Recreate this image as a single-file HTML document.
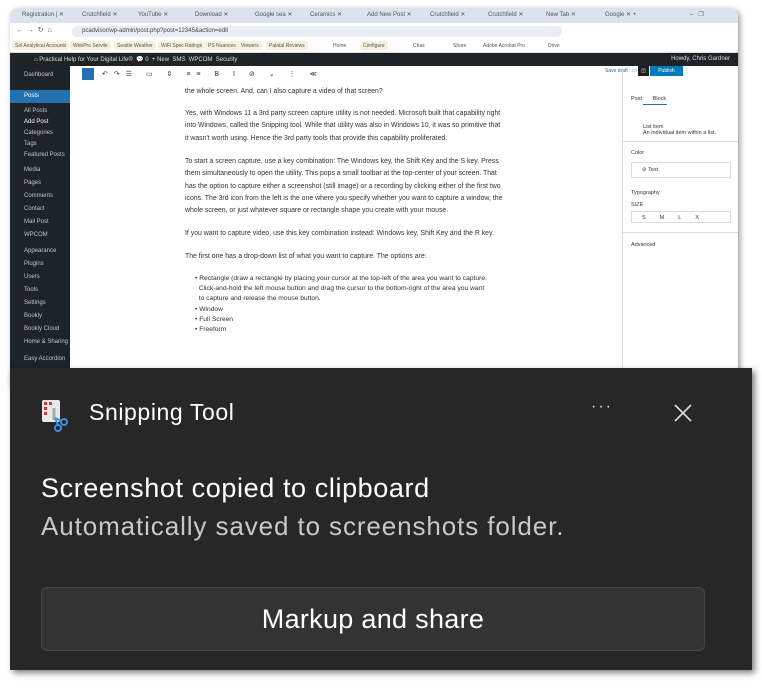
<!DOCTYPE html>
<html><head><meta charset="utf-8"><style>
*{margin:0;padding:0;box-sizing:border-box}
body{width:762px;height:696px;background:#fff;position:relative;overflow:hidden;font-family:"Liberation Sans",sans-serif}
.frame{position:absolute;left:10px;top:8px;width:728px;height:380px;background:#fff;border-radius:8px 8px 0 0;overflow:hidden;box-shadow:2px 2px 6px rgba(0,0,0,.4)}
.tabs{position:absolute;left:0;top:0;width:100%;height:15px;background:#dde3ee}
.tab{position:absolute;top:3px;height:10px;font-size:6px;color:#555;white-space:nowrap}
.addr{position:absolute;top:15px;left:0;width:100%;height:15px;background:#fff}
.url{position:absolute;left:62px;top:3px;width:300px;height:11px;background:#e9edf4;border-radius:6px;font-size:6px;color:#444;padding:2px 10px}
.bm{position:absolute;top:30px;left:0;width:100%;height:15px;background:#fff;border-bottom:1px solid #ddd}
.bk{position:absolute;top:3px;height:9px;font-size:5px;color:#555;background:#f6f1dc;border-radius:3px;padding:2px 3px}
.admin{position:absolute;top:45px;left:0;width:100%;height:13px;background:#1d2327;font-size:6px;color:#ddd}
.side{position:absolute;top:58px;left:0;width:60px;height:330px;background:#1d2327;font-size:6px;color:#c3c4c7}
.side div{position:absolute;left:14px}
.posts{position:absolute;left:0!important;top:24px;width:60px;height:13px;background:#2271b1;color:#fff;padding:3px 0 0 14px}
.edtext{position:absolute;left:175px;font-size:6.9px;color:#333;line-height:12.3px;white-space:nowrap}
.rs{position:absolute;left:612px;top:58px;width:116px;height:330px;border-left:1px solid #ddd;font-size:5.5px;color:#333}
.note{position:absolute;left:10px;top:368px;width:742px;height:302px;background:#272727;color:#fff;box-shadow:3px 3px 6px rgba(0,0,0,.5);font-family:"Liberation Sans",sans-serif}
</style></head><body>
<div class="frame">
 <div class="tabs">
  <div class="tab" style="left:12px">Registration | ✕</div><div class="tab" style="left:72px">Crutchfield ✕</div><div class="tab" style="left:128px">YouTube ✕</div><div class="tab" style="left:185px">Download ✕</div><div class="tab" style="left:245px">Google sea ✕</div><div class="tab" style="left:300px">Ceramics ✕</div><div class="tab" style="left:357px">Add New Post ✕</div><div class="tab" style="left:420px">Crutchfield ✕</div><div class="tab" style="left:478px">Crutchfield ✕</div><div class="tab" style="left:536px">New Tab ✕</div><div class="tab" style="left:595px">Google ✕ +</div><div class="tab" style="left:680px">–&nbsp;&nbsp;&nbsp;❐</div>
 </div>
 <div class="addr"><span style="position:absolute;left:6px;top:3px;font-size:7px;color:#555">←&nbsp;&nbsp;→&nbsp;&nbsp;↻&nbsp;&nbsp;⌂</span><div style="position:absolute;left:62px;top:3px;width:490px;height:11px;background:#e9edf4;border-radius:6px"></div><div class="url">pcadvisor/wp-admin/post.php?post=12345&action=edit</div></div>
 <div class="bm"><div class="bk" style="left:2px">Sol Analytical Accounts</div><div class="bk" style="left:60px">WebPro Servile</div><div class="bk" style="left:104px">Seattle Weather</div><div class="bk" style="left:148px">WiFi Spec Ratings</div><div class="bk" style="left:195px">PS Nuances</div><div class="bk" style="left:228px">Viewers</div><div class="bk" style="left:256px">Palatal Reviews</div><div class="bk" style="left:320px;background:#fff">Home</div><div class="bk" style="left:350px">Configure</div><div class="bk" style="left:400px;background:#fff">Chas</div><div class="bk" style="left:440px;background:#fff">Share</div><div class="bk" style="left:470px;background:#fff">Adobe Acrobat Pro</div><div class="bk" style="left:535px;background:#fff">Drive</div></div>
 <div class="admin"><span style="position:absolute;left:24px;top:3px">⌂ Practical Help for Your Digital Life® &nbsp;💬 0 &nbsp;+ New &nbsp;SMS &nbsp;WPCOM &nbsp;Security</span><span style="position:absolute;right:8px;top:3px">Howdy, Chris Gardner</span></div>
 <div class="side">
  <div style="top:6px">Dashboard</div><div class="posts">Posts</div>
  <div style="top:42px">All Posts</div><div style="top:53px;color:#fff">Add Post</div><div style="top:64px">Categories</div><div style="top:75px">Tags</div><div style="top:86px">Featured Posts</div>
  <div style="top:101px">Media</div><div style="top:114px">Pages</div><div style="top:127px">Comments</div><div style="top:140px">Contact</div><div style="top:153px">Mail Post</div><div style="top:166px">WPCOM</div><div style="top:182px">Appearance</div><div style="top:195px">Plugins</div><div style="top:208px">Users</div><div style="top:221px">Tools</div><div style="top:234px">Settings</div><div style="top:247px">Bookly</div><div style="top:260px">Bookly Cloud</div><div style="top:273px">Home & Sharing</div><div style="top:290px">Easy Accordion</div>
 </div>
 <div style="position:absolute;left:72px;top:60px;width:12px;height:12px;background:#2271b1"></div>
 <div style="position:absolute;left:92px;top:62px;font-size:7px;color:#333;letter-spacing:6px">↶↷☰ ▭ ⇕ ≡≡ B I ⊘ ⌄ ⋮ ≪</div>
 <div class="edtext" style="top:78px">the whole screen. And, can I also capture a video of that screen?</div>
 <div class="edtext" style="top:100px">Yes, with Windows 11 a 3rd party screen capture utility is not needed. Microsoft built that capability right<br>into Windows, called the Snipping tool. While that utility was also in Windows 10, it was so primitive that<br>it wasn't worth using. Hence the 3rd party tools that provide this capability proliferated.</div>
 <div class="edtext" style="top:148px">To start a screen capture, use a key combination: The Windows key, the Shift Key and the S key. Press<br>them simultaneously to open the utility. This pops a small toolbar at the top-center of your screen. That<br>has the option to capture either a screenshot (still image) or a recording by clicking either of the first two<br>icons. The 3rd icon from the left is the one where you specify whether you want to capture a window, the<br>whole screen, or just whatever square or rectangle shape you create with your mouse.</div>
 <div class="edtext" style="top:220px">If you want to capture video, use this key combination instead: Windows key, Shift Key and the R key.</div>
 <div class="edtext" style="top:243px">The first one has a drop-down list of what you want to capture. The options are:</div>
 <div class="edtext" style="top:266px;left:185px;line-height:10.2px;font-size:6.7px">• Rectangle (draw a rectangle by placing your cursor at the top-left of the area you want to capture.<br>&nbsp;&nbsp;Click-and-hold the left mouse button and drag the cursor to the bottom-right of the area you want<br>&nbsp;&nbsp;to capture and release the mouse button.<br>• Window<br>• Full Screen<br>• Freeform</div>
 <div style="position:absolute;left:595px;top:60px;width:120px;height:12px;font-size:5px;color:#2271b1">Save draft &nbsp;&nbsp;▭ <span style="background:#1e1e1e;color:#fff;padding:2px 3px">◫</span> <span style="background:#007cba;color:#fff;padding:2px 8px">Publish</span> ⋮</div>
 <div class="rs">
  <div style="position:absolute;left:8px;top:30px">Post &nbsp;&nbsp;&nbsp;&nbsp;&nbsp;&nbsp;Block</div><div style="position:absolute;left:20px;top:38px;width:24px;height:1px;background:#2271b1"></div>
  <div style="position:absolute;left:20px;top:58px">List item<br>An individual item within a list.</div>
  <div style="position:absolute;left:0;top:75px;width:100%;height:1px;background:#ddd"></div>
  <div style="position:absolute;left:8px;top:84px">Color</div>
  <div style="position:absolute;left:8px;top:96px;width:100px;height:16px;border:1px solid #ddd;padding:4px 10px">⊘ Text</div>
  <div style="position:absolute;left:8px;top:124px">Typography</div><div style="position:absolute;left:8px;top:136px">SIZE</div>
  <div style="position:absolute;left:8px;top:145px;width:100px;height:12px;border:1px solid #ddd;padding:3px 10px;letter-spacing:14px">SMLX</div>
  <div style="position:absolute;left:0;top:166px;width:100%;height:1px;background:#ddd"></div>
  <div style="position:absolute;left:8px;top:176px">Advanced</div>
 </div>
</div>
<div class="note">
 <svg style="position:absolute;left:30px;top:30px" width="34" height="34" viewBox="0 0 34 34"><rect x="2" y="2" width="18" height="22" rx="2" fill="#e8e8e8"/><rect x="4" y="4" width="3" height="3" fill="#d33"/><rect x="9" y="4" width="3" height="3" fill="#d33"/><rect x="4" y="9" width="3" height="3" fill="#d33"/><rect x="4" y="14" width="3" height="3" fill="#d33"/><path d="M14 10v12" stroke="#aaa" stroke-width="3"/><circle cx="24" cy="24" r="3" fill="none" stroke="#3a8ee6" stroke-width="2"/><circle cx="18" cy="30" r="3" fill="none" stroke="#3a8ee6" stroke-width="2"/><path d="M15 20l3 7M15 20l7 3" stroke="#3a8ee6" stroke-width="2"/></svg>
 <div style="position:absolute;left:79px;top:31px;font-size:23px;color:#fff;letter-spacing:0.6px">Snipping Tool</div>
 <div style="position:absolute;left:581px;top:30px;font-size:16px;color:#ddd;letter-spacing:2px">···</div>
 <svg style="position:absolute;left:664px;top:36px" width="18" height="18"><path d="M1 1L17 17M17 1L1 17" stroke="#ddd" stroke-width="1.6"/></svg>
 <div style="position:absolute;left:31px;top:105px;font-size:27px;color:#fff;letter-spacing:0.6px">Screenshot copied to clipboard</div>
 <div style="position:absolute;left:31px;top:143px;font-size:26px;color:#c8c8c8;letter-spacing:0.9px">Automatically saved to screenshots folder.</div>
 <div style="position:absolute;left:31px;top:219px;width:664px;height:64px;background:#333;border:1px solid #474747;border-radius:6px;text-align:center;line-height:62px;font-size:27px;color:#fff;letter-spacing:0.3px">Markup and share</div>
</div>
</body></html>
